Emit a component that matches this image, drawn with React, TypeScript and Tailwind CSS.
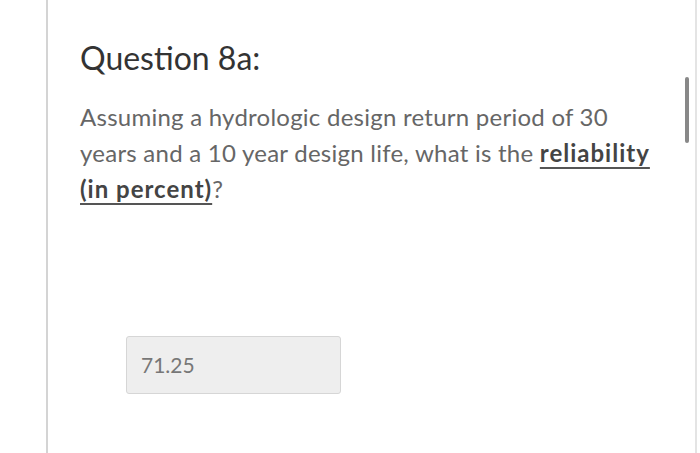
export default function App() {
  return (
    <div
      className="h-[453px] w-[700px] overflow-hidden bg-white"
      style={{ fontFamily: "Lato, 'Open Sans', sans-serif" }}
    >
      <div className="flex h-full">
        <div className="w-[46px] shrink-0" />
        <div className="relative h-full w-[651px] border-x-2 border-[#d4d4d4] border-r-[#e4e4e4] pl-[32px] pr-[36px]">
          <h1 className="pt-[38px] text-[32px] leading-[40px] text-[#333]">Question 8a:</h1>
          <p className="mt-[21px] text-[24px] leading-[36px] tracking-[0.25px] text-[#666]">
            Assuming a hydrologic design return period of 30 years and a 10 year design life, what is
            the{" "}
            <span className="font-bold tracking-[1px] text-[#444] underline decoration-[#555] decoration-[1.5px] underline-offset-[5px]">
              reliability (in percent)
            </span>
            ?
          </p>
          <div className="ml-[46px] mt-[129px] flex h-[58px] w-[215px] items-center rounded-[3px] border border-[#d6d6d6] bg-[#eeeeee] px-[14px] text-[21px] text-[#777]">
            71.25
          </div>
          <div className="absolute right-[6px] top-[77px] h-[66px] w-[4px] rounded-full bg-[#888]" />
        </div>
      </div>
    </div>
  );
}
